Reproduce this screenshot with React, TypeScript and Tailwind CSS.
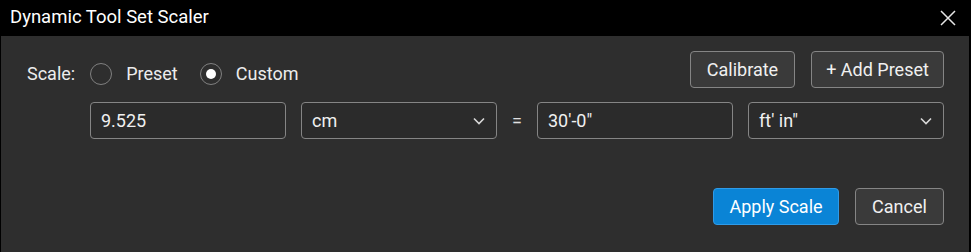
import { useState } from 'react'

function Chevron() {
  return (
    <svg width="12" height="8" viewBox="0 0 12 8" fill="none" className="shrink-0">
      <path d="M1 1.5 L6 6.5 L11 1.5" stroke="#d8d8d8" strokeWidth="1.6" />
    </svg>
  )
}

function Radio({ checked, label, onClick }: { checked: boolean; label: string; onClick: () => void }) {
  return (
    <button type="button" onClick={onClick} className="flex items-center gap-[14px]">
      <span className="w-[22px] h-[22px] rounded-full border-[1.5px] border-[#808080] flex items-center justify-center">
        {checked && <span className="w-[10px] h-[10px] rounded-full bg-white" />}
      </span>
      <span className="text-[18px] text-[#ececec]">{label}</span>
    </button>
  )
}

function Field({ value }: { value: string }) {
  return (
    <div className="w-[196px] h-[37px] rounded-[4px] border border-[#858585] bg-[#2b2b2b] flex items-center px-[10px] text-[18px] text-[#f0f0f0]">
      {value}
    </div>
  )
}

function Select({ value }: { value: string }) {
  return (
    <div className="w-[196px] h-[37px] rounded-[4px] border border-[#858585] bg-[#2b2b2b] flex items-center justify-between pl-[10px] pr-[11px] text-[18px] text-[#f0f0f0]">
      <span>{value}</span>
      <Chevron />
    </div>
  )
}

export default function App() {
  const [mode, setMode] = useState<'preset' | 'custom'>('custom')

  return (
    <div className="w-[971px] h-[252px] flex flex-col bg-black font-['Roboto',sans-serif] overflow-hidden">
      {/* Title bar */}
      <div className="h-[36px] shrink-0 flex items-center justify-between pl-[10px] pr-[14px]">
        <span className="text-[18.5px] text-white">Dynamic Tool Set Scaler</span>
        <svg width="18" height="18" viewBox="0 0 18 18" fill="none">
          <path d="M2 2 L16 16 M16 2 L2 16" stroke="#e6e6e6" strokeWidth="1.5" />
        </svg>
      </div>

      {/* Body */}
      <div className="flex-1 ml-px mr-[2px] bg-[#2e2e2e] pl-[26px] pr-[25px] pt-[15px]">
        <div className="flex items-start justify-between">
          <div className="flex items-center h-[37px] mt-[4px]">
            <span className="text-[18px] text-[#ececec] mr-[15px]">Scale:</span>
            <Radio checked={mode === 'preset'} label="Preset" onClick={() => setMode('preset')} />
            <div className="w-[22px]" />
            <Radio checked={mode === 'custom'} label="Custom" onClick={() => setMode('custom')} />
          </div>
          <div className="flex gap-[16px]">
            <button className="h-[37px] w-[105px] rounded-[4px] border border-[#858585] bg-[#3a3a3a] text-[18px] text-[#f0f0f0]">
              Calibrate
            </button>
            <button className="h-[37px] w-[133px] rounded-[4px] border border-[#858585] bg-[#3a3a3a] text-[18px] text-[#f0f0f0]">
              + Add Preset
            </button>
          </div>
        </div>

        <div className="flex items-center mt-[10px] ml-[63px]">
          <Field value="9.525" />
          <div className="w-[15px]" />
          <Select value="cm" />
          <span className="w-[40px] text-center text-[18px] text-[#e0e0e0]">=</span>
          <Field value={`30'-0"`} />
          <div className="w-[15px]" />
          <Select value={`ft' in"`} />
        </div>

        <div className="flex justify-end gap-[16px] mt-[49px]">
          <button className="h-[37px] w-[126px] rounded-[4px] border border-[#2f9be8] bg-[#0a84d6] text-[18px] text-white">
            Apply Scale
          </button>
          <button className="h-[37px] w-[89px] rounded-[4px] border border-[#858585] bg-[#3a3a3a] text-[18px] text-[#f0f0f0]">
            Cancel
          </button>
        </div>
      </div>
    </div>
  )
}
